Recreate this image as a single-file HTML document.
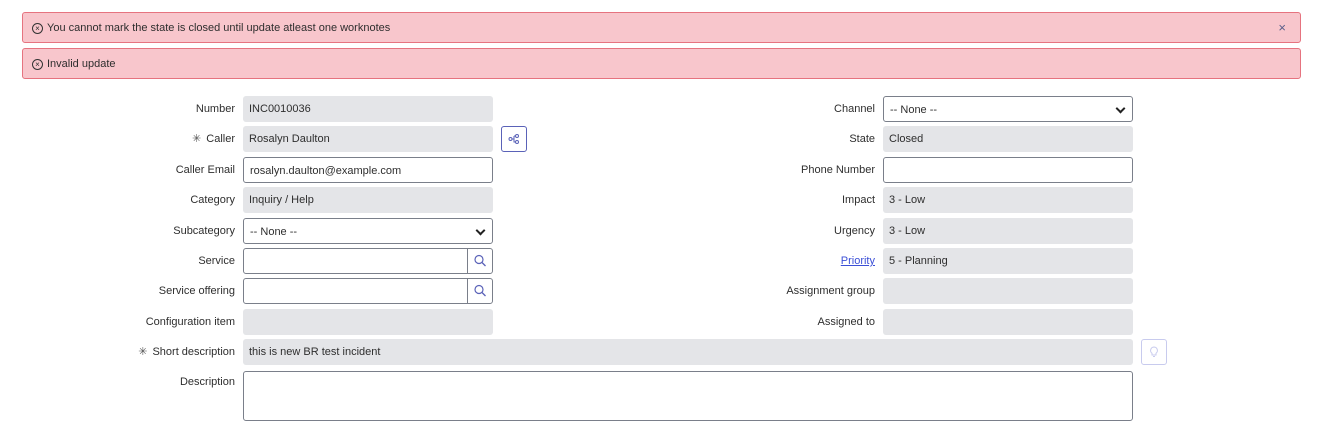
<!DOCTYPE html>
<html><head><style>
body{margin:0;width:1325px;height:431px;background:#fff;font-family:"Liberation Sans",sans-serif;font-size:11px;color:#2e2e2e;position:relative;overflow:hidden}
.a{position:absolute;left:22px;width:1277px;height:29px;background:#f8c6cc;border:1px solid #e6737f;border-radius:3px;line-height:30px}
.a span.t{position:absolute;left:24px}
.ic{position:absolute;left:9px;top:10px;width:9px;height:9px;border:1px solid #333;border-radius:50%;font-size:8px;line-height:9px;text-align:center}
.x{position:absolute;right:14px;color:#5b5f8a;font-size:13px}
.l{position:absolute;text-align:right;width:200px;line-height:26px}
.f{position:absolute;height:26px;border-radius:3px;box-sizing:border-box;line-height:26px;padding-left:6px}
.ro{background:#e4e5e8}
.in{background:#fff;border:1px solid #7a7f8a}
.sel:after{content:"";position:absolute;right:8px;top:8px;width:5px;height:5px;border-right:2px solid #222;border-bottom:2px solid #222;transform:rotate(45deg)}
.srch{position:absolute;right:0;top:0;width:24px;height:24px;border-left:1px solid #7a7f8a}
.req{color:#555;margin-right:5px}
a{color:#3b4fd6;text-decoration:underline}
</style></head><body>
<div class="a" style="top:12px"><div class="ic">×</div><span class="t">You cannot mark the state is closed until update atleast one worknotes</span><span class="x">×</span></div>
<div class="a" style="top:48px"><div class="ic">×</div><span class="t">Invalid update</span></div>

<div class="l" style="left:35px;top:96px">Number</div><div class="f ro" style="left:243px;top:96px;width:250px">INC0010036</div>
<div class="l" style="left:35px;top:126px"><span class="req">✳</span>Caller</div><div class="f ro" style="left:243px;top:126px;width:250px">Rosalyn Daulton</div>
<div style="position:absolute;left:501px;top:126px;width:24px;height:24px;border:1px solid #5a62b8;border-radius:3px"><svg width="24" height="24" viewBox="0 0 24 24"><g fill="none" stroke="#5a62b8" stroke-width="1"><circle cx="8.5" cy="12" r="1.5"/><circle cx="15" cy="9" r="1.5"/><circle cx="15" cy="15" r="1.5"/><path d="M10 12h2M12 9v6h1.5M12 9h1.5"/></g></svg></div>
<div class="l" style="left:35px;top:157px">Caller Email</div><div class="f in" style="left:243px;top:157px;width:250px">rosalyn.daulton@example.com</div>
<div class="l" style="left:35px;top:187px">Category</div><div class="f ro" style="left:243px;top:187px;width:250px">Inquiry / Help</div>
<div class="l" style="left:35px;top:218px">Subcategory</div><div class="f in sel" style="left:243px;top:218px;width:250px">-- None --</div>
<div class="l" style="left:35px;top:248px">Service</div><div class="f in" style="left:243px;top:248px;width:250px"><div class="srch"><svg width="24" height="24"><circle cx="11" cy="10.5" r="4" fill="none" stroke="#5a62b8" stroke-width="1.2"/><path d="M14 13.5l3.5 3.5" stroke="#5a62b8" stroke-width="1.3"/></svg></div></div>
<div class="l" style="left:35px;top:278px">Service offering</div><div class="f in" style="left:243px;top:278px;width:250px"><div class="srch"><svg width="24" height="24"><circle cx="11" cy="10.5" r="4" fill="none" stroke="#5a62b8" stroke-width="1.2"/><path d="M14 13.5l3.5 3.5" stroke="#5a62b8" stroke-width="1.3"/></svg></div></div>
<div class="l" style="left:35px;top:309px">Configuration item</div><div class="f ro" style="left:243px;top:309px;width:250px"></div>
<div class="l" style="left:35px;top:339px"><span class="req">✳</span>Short description</div><div class="f ro" style="left:243px;top:339px;width:890px">this is new BR test incident</div>
<div style="position:absolute;left:1141px;top:339px;width:24px;height:24px;border:1px solid #c8cbee;border-radius:3px"><svg width="24" height="24"><path d="M12 7a3.5 3.5 0 0 0-2 6.3V15h4v-1.7A3.5 3.5 0 0 0 12 7zM11 16.5h2" fill="none" stroke="#c8cbee"/></svg></div>
<div class="l" style="left:35px;top:369px">Description</div><div class="f in" style="left:243px;top:371px;width:890px;height:50px"></div>

<div class="l" style="left:675px;top:96px">Channel</div><div class="f in sel" style="left:883px;top:96px;width:250px">-- None --</div>
<div class="l" style="left:675px;top:126px">State</div><div class="f ro" style="left:883px;top:126px;width:250px">Closed</div>
<div class="l" style="left:675px;top:157px">Phone Number</div><div class="f in" style="left:883px;top:157px;width:250px"></div>
<div class="l" style="left:675px;top:187px">Impact</div><div class="f ro" style="left:883px;top:187px;width:250px">3 - Low</div>
<div class="l" style="left:675px;top:218px">Urgency</div><div class="f ro" style="left:883px;top:218px;width:250px">3 - Low</div>
<div class="l" style="left:675px;top:248px"><a>Priority</a></div><div class="f ro" style="left:883px;top:248px;width:250px">5 - Planning</div>
<div class="l" style="left:675px;top:278px">Assignment group</div><div class="f ro" style="left:883px;top:278px;width:250px"></div>
<div class="l" style="left:675px;top:309px">Assigned to</div><div class="f ro" style="left:883px;top:309px;width:250px"></div>
</body></html>
